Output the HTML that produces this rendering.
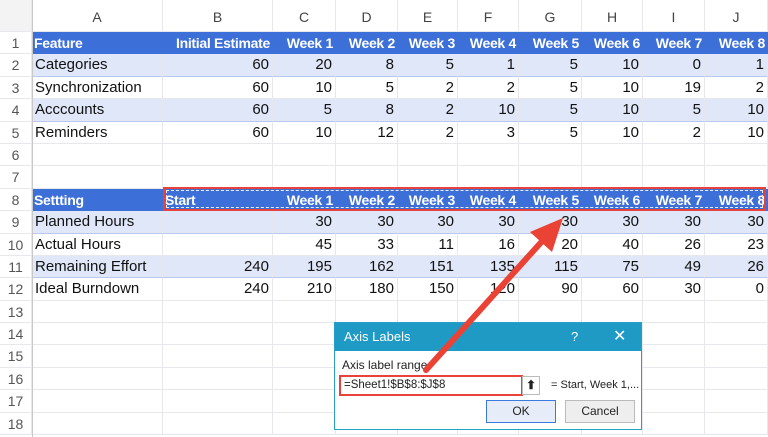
<!DOCTYPE html>
<html><head><meta charset="utf-8"><style>
body{margin:0;width:768px;height:437px;overflow:hidden;background:#fff;font-family:"Liberation Sans",sans-serif;position:relative}
.g{display:grid;grid-template-columns:32px 131px 110px 63px 62px 60px 61px 63px 61px 62px 63px;grid-template-rows:32px repeat(18,22.4px);position:absolute;left:0;top:0;width:768px}
.g div{box-sizing:border-box;border-right:1px solid #e6e8ee;border-bottom:1px solid #e6e8ee;font-size:15px;color:#111;line-height:22px;white-space:nowrap;overflow:hidden;padding:0 3px;text-align:right}
.g .h{text-align:center;color:#444;line-height:34px;font-size:14px}
.g .n{text-align:center;color:#555;padding:0;font-size:14px}
.g .t{text-align:left}
.g .b{background:#3d6fd8;color:#fff;font-weight:bold;font-size:14px;border-color:#3d6fd8;letter-spacing:-0.3px;padding:0 2px}
.g .l{background:#dfe7f8;border-bottom-color:#b9c8ee}
</style></head><body>
<div class="g">
<div class="h" style="background:#f3f3f3"></div><div class="h">A</div><div class="h">B</div><div class="h">C</div><div class="h">D</div><div class="h">E</div><div class="h">F</div><div class="h">G</div><div class="h">H</div><div class="h">I</div><div class="h">J</div>

<div class="n">1</div><div class="b t">Feature</div><div class="b">Initial Estimate</div><div class="b">Week 1</div><div class="b">Week 2</div><div class="b">Week 3</div><div class="b">Week 4</div><div class="b">Week 5</div><div class="b">Week 6</div><div class="b">Week 7</div><div class="b">Week 8</div>
<div class="n">2</div><div class="l t">Categories</div><div class="l">60</div><div class="l">20</div><div class="l">8</div><div class="l">5</div><div class="l">1</div><div class="l">5</div><div class="l">10</div><div class="l">0</div><div class="l">1</div>
<div class="n">3</div><div class="t">Synchronization</div><div>60</div><div>10</div><div>5</div><div>2</div><div>2</div><div>5</div><div>10</div><div>19</div><div>2</div>
<div class="n">4</div><div class="l t">Acccounts</div><div class="l">60</div><div class="l">5</div><div class="l">8</div><div class="l">2</div><div class="l">10</div><div class="l">5</div><div class="l">10</div><div class="l">5</div><div class="l">10</div>
<div class="n">5</div><div class="t">Reminders</div><div>60</div><div>10</div><div>12</div><div>2</div><div>3</div><div>5</div><div>10</div><div>2</div><div>10</div>
<div class="n">6</div><div></div><div></div><div></div><div></div><div></div><div></div><div></div><div></div><div></div><div></div>
<div class="n">7</div><div></div><div></div><div></div><div></div><div></div><div></div><div></div><div></div><div></div><div></div>
<div class="n">8</div><div class="b t">Settting</div><div class="b t">Start</div><div class="b">Week 1</div><div class="b">Week 2</div><div class="b">Week 3</div><div class="b">Week 4</div><div class="b">Week 5</div><div class="b">Week 6</div><div class="b">Week 7</div><div class="b">Week 8</div>
<div class="n">9</div><div class="l t">Planned Hours</div><div class="l"></div><div class="l">30</div><div class="l">30</div><div class="l">30</div><div class="l">30</div><div class="l">30</div><div class="l">30</div><div class="l">30</div><div class="l">30</div>
<div class="n">10</div><div class="t">Actual Hours</div><div></div><div>45</div><div>33</div><div>11</div><div>16</div><div>20</div><div>40</div><div>26</div><div>23</div>
<div class="n">11</div><div class="l t">Remaining Effort</div><div class="l">240</div><div class="l">195</div><div class="l">162</div><div class="l">151</div><div class="l">135</div><div class="l">115</div><div class="l">75</div><div class="l">49</div><div class="l">26</div>
<div class="n">12</div><div class="t">Ideal Burndown</div><div>240</div><div>210</div><div>180</div><div>150</div><div>120</div><div>90</div><div>60</div><div>30</div><div>0</div>
<div class="n">13</div><div></div><div></div><div></div><div></div><div></div><div></div><div></div><div></div><div></div><div></div>
<div class="n">14</div><div></div><div></div><div></div><div></div><div></div><div></div><div></div><div></div><div></div><div></div>
<div class="n">15</div><div></div><div></div><div></div><div></div><div></div><div></div><div></div><div></div><div></div><div></div>
<div class="n">16</div><div></div><div></div><div></div><div></div><div></div><div></div><div></div><div></div><div></div><div></div>
<div class="n">17</div><div></div><div></div><div></div><div></div><div></div><div></div><div></div><div></div><div></div><div></div>
<div class="n">18</div><div></div><div></div><div></div><div></div><div></div><div></div><div></div><div></div><div></div><div></div>
</div>
<div style="position:absolute;left:32px;top:0;width:1px;height:437px;background:#c8c8c8"></div>
<div style="position:absolute;left:163px;top:187px;width:603px;height:24px;border:2px solid #e8423a;box-sizing:border-box"></div>
<div style="position:absolute;left:166px;top:190px;width:597px;height:18px;border:1px dashed #e8f0e8;box-sizing:border-box"></div>
<div style="position:absolute;left:334px;top:322px;width:308px;height:108px;border:1px solid #27a0c8;background:#fff;box-sizing:border-box;font-size:12px;color:#222">
<div style="background:#1e9ac4;height:28px;color:#fff;font-size:13px;line-height:28px;padding-left:9px;position:relative">Axis Labels<span style="position:absolute;left:236px">?</span><span style="position:absolute;left:278px;font-size:16px">✕</span></div>
<div style="position:absolute;left:7px;top:35px">Axis label range:</div>
<div style="position:absolute;left:4px;top:52px;width:184px;height:21px;border:2px solid #e8423a;box-sizing:border-box;line-height:17px;padding-left:3px;font-size:11.5px">=Sheet1!$B$8:$J$8</div>
<div style="position:absolute;left:187px;top:53px;width:18px;height:19px;border:1px solid #bbb;box-sizing:border-box;text-align:center;font-weight:bold;line-height:17px">⬆</div>
<div style="position:absolute;left:216px;top:56px;white-space:nowrap;font-size:11px">= Start, Week 1,...</div>
<div style="position:absolute;left:151px;top:77px;width:70px;height:23px;border:1px solid #3b7be0;background:#e6ecf8;box-sizing:border-box;text-align:center;line-height:21px">OK</div>
<div style="position:absolute;left:230px;top:77px;width:70px;height:23px;border:1px solid #bbb;background:#eee;box-sizing:border-box;text-align:center;line-height:21px">Cancel</div>
</div>
<svg style="position:absolute;left:0;top:0" width="768" height="437">
<line x1="426" y1="370" x2="545" y2="238" stroke="#ea4335" stroke-width="6" stroke-linecap="round"/>
<polygon points="563,218 530,232 552,252" fill="#ea4335"/>
</svg>
</body></html>
